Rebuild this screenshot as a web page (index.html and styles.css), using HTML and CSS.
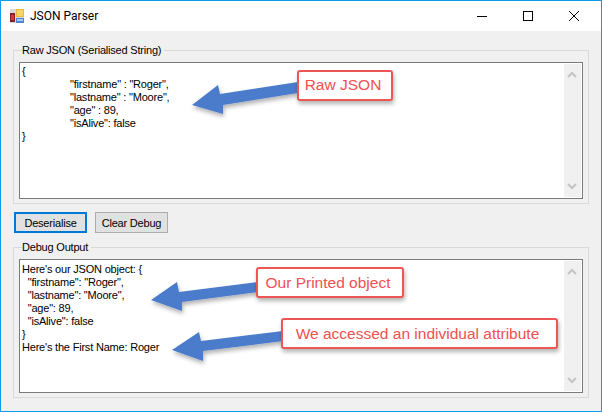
FILE: index.html
```html
<!DOCTYPE html>
<html lang="en">
  <head>
    <meta charset="UTF-8" />
    <title>JSON Parser</title>
    <link rel="stylesheet" href="styles.css">
  </head>
  <body>
    <div class="window">
      <div class="titlebar">
        <svg class="app-icon" width="14" height="14" viewBox="0 0 14 14">
          <rect x="0" y="0" width="14" height="14" fill="#d9d9d9"/>
          <rect x="6" y="0" width="8" height="8" fill="#e8b93c"/>
          <rect x="7" y="1" width="6" height="6" fill="#f6d466"/>
          <rect x="0" y="4" width="5" height="9" fill="#8c1f1f"/>
          <rect x="1" y="6" width="3" height="5" fill="#d83a3a"/>
          <rect x="6" y="9" width="8" height="5" fill="#4d86d0"/>
          <rect x="7" y="10" width="6" height="2" fill="#a8c8ee"/>
        </svg>
        <span class="title">JSON Parser</span>
        <div class="controls">
          <svg class="control" width="46" height="30" viewBox="0 0 46 30">
            <path d="M18 15.5h10" stroke="#000" fill="none"/>
          </svg>
          <svg class="control" width="46" height="30" viewBox="0 0 46 30">
            <rect x="18.5" y="10.5" width="9" height="9" stroke="#000" fill="none"/>
          </svg>
          <svg class="control" width="46" height="30" viewBox="0 0 46 30">
            <path d="M18 10l10 10M28 10l-10 10" stroke="#000" fill="none"/>
          </svg>
        </div>
      </div>

      <div class="client">
        <fieldset class="group group-raw">
          <legend>Raw JSON (Serialised String)</legend>
          <div class="textbox">
            <pre class="text">{
	"firstname" : "Roger",
	"lastname" : "Moore",
	"age" : 89,
	"isAlive": false
}</pre>
            <div class="scrollbar">
              <svg width="16" height="12" viewBox="0 0 16 12"><path d="M4 9l4-4 4 4" stroke="#c4c4c4" stroke-width="2" fill="none"/></svg>
              <svg width="16" height="12" viewBox="0 0 16 12"><path d="M4 3l4 4 4-4" stroke="#c4c4c4" stroke-width="2" fill="none"/></svg>
            </div>
          </div>
        </fieldset>

        <div class="buttons">
          <button class="btn btn-default">Deserialise</button>
          <button class="btn">Clear Debug</button>
        </div>

        <fieldset class="group group-debug">
          <legend>Debug Output</legend>
          <div class="textbox">
            <pre class="text">Here's our JSON object: {
  "firstname": "Roger",
  "lastname": "Moore",
  "age": 89,
  "isAlive": false
}
Here's the First Name: Roger</pre>
            <div class="scrollbar">
              <svg width="16" height="12" viewBox="0 0 16 12"><path d="M4 9l4-4 4 4" stroke="#c4c4c4" stroke-width="2" fill="none"/></svg>
              <svg width="16" height="12" viewBox="0 0 16 12"><path d="M4 3l4 4 4-4" stroke="#c4c4c4" stroke-width="2" fill="none"/></svg>
            </div>
          </div>
        </fieldset>
      </div>

      <!-- annotations drawn on top of the screenshot -->
      <svg class="arrows" width="602" height="412" viewBox="0 0 602 412">
        <defs>
          <filter id="shadow" x="-20%" y="-30%" width="140%" height="170%">
            <feDropShadow dx="1" dy="3" stdDeviation="2" flood-color="#000" flood-opacity="0.3"/>
          </filter>
        </defs>
        <g fill="#4b7bcb" filter="url(#shadow)">
          <polygon points="192,105 218,85 220,94 298,82 298,93 223,105 223,114"/>
          <polygon points="151,300 177,282 179,292 258,282 258,292 182,302 182,311"/>
          <polygon points="172,350 199,332 201,341 283,331 283,341 203,351 203,361"/>
        </g>
      </svg>
      <div class="callout callout-raw">Raw JSON</div>
      <div class="callout callout-printed">Our Printed object</div>
      <div class="callout callout-access">We accessed an individual attribute</div>
    </div>
  </body>
</html>
```

FILE: styles.css
```css
html,
body {
  margin: 0;
  padding: 0;
}

body {
  font-family: "Liberation Sans", Arial, sans-serif;
  font-size: 11px;
  letter-spacing: -0.2px;
  color: #000;
}

.window {
  position: relative;
  box-sizing: border-box;
  width: 602px;
  height: 412px;
  border: 1px solid #0c9bee;
  background-color: #f0f0f0;
  overflow: hidden;
}

.titlebar {
  display: flex;
  align-items: center;
  height: 30px;
  background-color: #fff;
}

.app-icon {
  margin-left: 9px;
  margin-right: 6px;
}

.title {
  font-family: Roboto, sans-serif;
  font-size: 12px;
  letter-spacing: 0;
}

.controls {
  display: flex;
  margin-left: auto;
  margin-right: 4px;
}

.client {
  padding: 12px 12px 0;
}

.group {
  box-sizing: border-box;
  width: 576px;
  margin: 0;
  padding: 5px 5px 4px;
  border: 1px solid #d9d9d9;
}

.group legend {
  margin-left: 3px;
  padding: 0 3px 0 0;
  line-height: 14px;
}

.group-raw {
  height: 161px;
}

.group-debug {
  height: 158px;
}

.textbox {
  display: flex;
  box-sizing: border-box;
  width: 564px;
  border: 1px solid #7a7a7a;
  background-color: #fff;
}

.group-raw .textbox {
  height: 137px;
}

.group-debug .textbox {
  height: 134px;
}

.text {
  flex: 1;
  margin: 0;
  padding: 2px;
  font-family: inherit;
  font-size: inherit;
  line-height: 13px;
  tab-size: 48px;
}

.group-debug .text {
  padding-top: 3px;
}

.scrollbar {
  display: flex;
  flex-direction: column;
  justify-content: space-between;
  width: 17px;
  margin: 1px;
  padding: 4px 0;
  box-sizing: border-box;
  background-color: #f0f0f0;
}

.buttons {
  display: flex;
  gap: 8px;
  margin: 8px 0 7px 1px;
}

.btn {
  box-sizing: border-box;
  width: 73px;
  height: 21px;
  padding: 0;
  border: 1px solid #adadad;
  background-color: #e1e1e1;
  font-family: inherit;
  font-size: 11px;
  letter-spacing: -0.2px;
}

.btn-default {
  border: 2px solid #0078d7;
}

.arrows {
  position: absolute;
  left: -1px;
  top: -1px;
}

.callout {
  position: absolute;
  box-sizing: border-box;
  display: flex;
  align-items: center;
  justify-content: center;
  height: 31px;
  padding-right: 4px;
  border: 2px solid #ee5555;
  border-radius: 3px;
  background-color: #fff;
  color: #f05050;
  font-size: 15.5px;
  letter-spacing: 0;
  box-shadow: 1px 3px 4px rgba(0, 0, 0, 0.3);
}

.callout-raw {
  left: 296px;
  top: 69px;
  width: 96px;
  padding-bottom: 2px;
}

.callout-printed {
  left: 255px;
  top: 266px;
  width: 148px;
}

.callout-access {
  left: 280px;
  top: 317px;
  width: 277px;
}
```
